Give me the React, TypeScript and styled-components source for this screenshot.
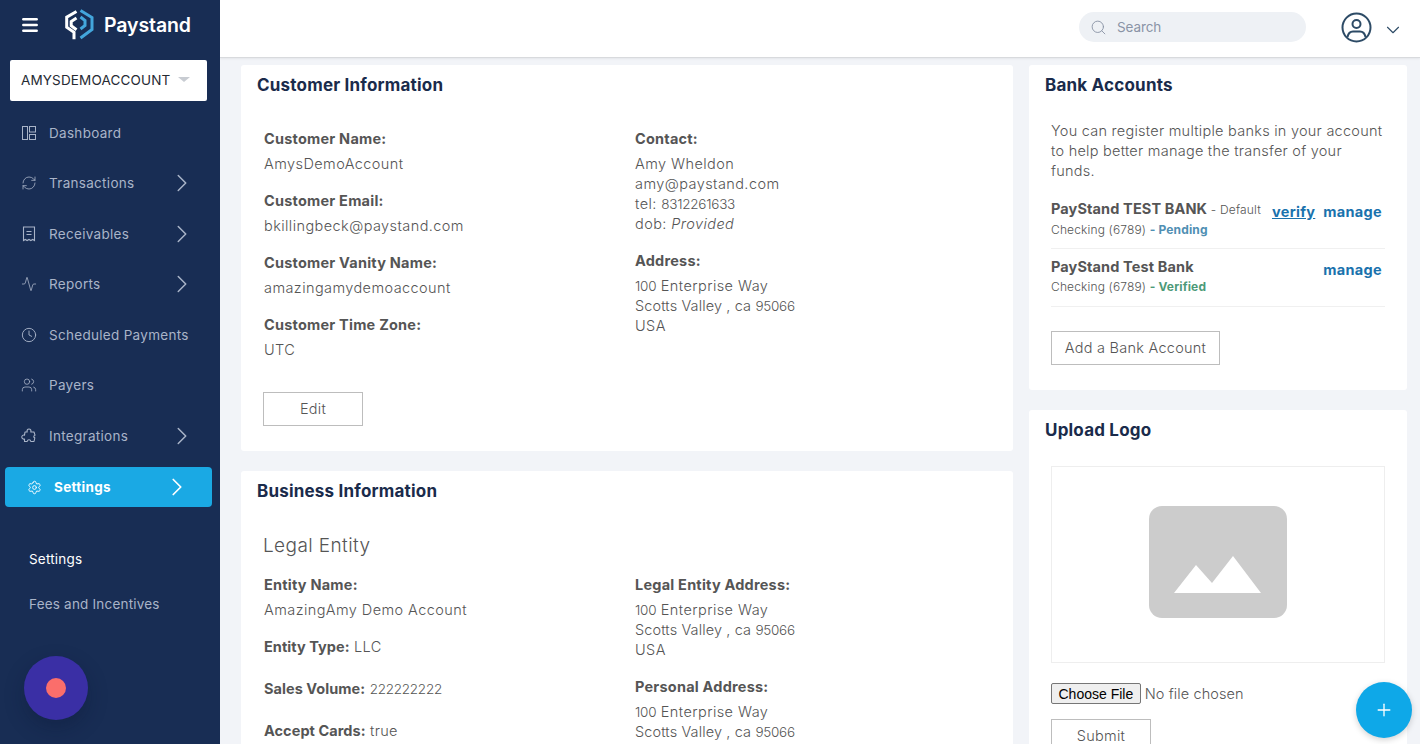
import React from "react";
import styled, { createGlobalStyle } from "styled-components";
import { Activity, ChevronDown, ChevronRight, Clock, Menu, Plus, RefreshCw, Search, Settings, Users } from "lucide-react";

const Global = createGlobalStyle`
  html, body { margin: 0; padding: 0; height: 100%; overflow: hidden; }
  * { box-sizing: border-box; }
  body { font-family: Inter, "Noto Sans", sans-serif; color: #666; background: #f2f4f8; }
`;

const Page = styled.div`
  display: flex; width: 100%; height: 744px; overflow: hidden; position: relative;
`;
const Sidebar = styled.aside`
  width: 220px; flex: none; background: #182d54; display: flex; flex-direction: column; position: relative;
`;
const Brand = styled.div`
  height: 50px; display: flex; align-items: center; padding-left: 20px; color: #fff; flex: none;
`;
const BrandGap = styled.span`
  width: 24px; flex: none;
`;
const Wordmark = styled.span`
  font-size: 19.5px; font-weight: 600; margin-left: 10px; letter-spacing: -0.1px; color: #fff;
`;
const AccountSelect = styled.div`
  margin: 10px 13px 0 10px; height: 41px; background: #fff; border-radius: 2px; display: flex; align-items: center;
  justify-content: space-between; padding: 0 17px 1px 11px; font-size: 13.5px; color: #262a33; letter-spacing: 0.15px; flex: none;
`;
const Caret = styled.span`
  width: 0; height: 0; border-left: 6px solid transparent; border-right: 6px solid transparent; border-top: 5px solid #c8ccd2; margin-top: -2px;
`;
const Nav = styled.nav`
  margin-top: 6.5px; display: flex; flex-direction: column;
`;
const NavItem = styled.div<{ $active?: boolean }>`
  height: ${(p) => (p.$active ? "40px" : "50.5px")};
  margin: ${(p) => (p.$active ? "6px 8px 0 5px" : "0")};
  padding: ${(p) => (p.$active ? "0 20px 0 22px" : "0 23px 0 21px")};
  display: flex; align-items: center; gap: 12px;
  border-radius: 4px;
  background: ${(p) => (p.$active ? "#1aa9e4" : "transparent")};
  color: ${(p) => (p.$active ? "#fff" : "#a9b4c8")};
  font-size: 13.5px; font-weight: ${(p) => (p.$active ? 700 : 400)}; letter-spacing: 0.3px;
  svg { flex: none; }
`;
const NavLabel = styled.span`
  flex: 1; white-space: nowrap;
`;
const SubNav = styled.div`
  margin-top: 42.5px; padding-left: 29px; display: flex; flex-direction: column; gap: 27px;
`;
const SubItem = styled.div<{ $active?: boolean }>`
  font-size: 13.5px; line-height: 18px; letter-spacing: 0.2px; color: ${(p) => (p.$active ? "#fff" : "#a9b4c8")};
`;
const Blob = styled.div`
  position: absolute; left: 24px; top: 656px; width: 64px; height: 64px; border-radius: 50%; background: #3a2fa5;
  display: flex; align-items: center; justify-content: center; box-shadow: 0 8px 20px rgba(10, 20, 50, .3);
`;
const BlobDot = styled.span`
  width: 20px; height: 20px; border-radius: 50%; background: #fb6e6b;
`;
const Main = styled.main`
  flex: 1; min-width: 0; display: flex; flex-direction: column; background: #f2f4f8;
`;
const Header = styled.header`
  height: 58px; flex: none; background: #fff; border-bottom: 1px solid #d8dadd; box-shadow: 0 1px 2px rgba(0, 0, 0, .06);
  display: flex; align-items: center; justify-content: flex-end; padding: 0 16px 3px 0;
`;
const SearchBox = styled.div`
  width: 227px; height: 30px; border-radius: 15px; background: #eef1f5; display: flex; align-items: center;
  padding-left: 11px; gap: 10px; color: #8a94a6; font-size: 13.5px; letter-spacing: -0.1px; margin-right: 35px;
`;
const ChevronWrap = styled.span`
  margin-left: 10px; margin-top: 6px; display: flex; color: #2d4b66;
`;
const Content = styled.div`
  flex: 1; display: flex; gap: 16px; padding: 7px 13px 0 21px; min-height: 0; overflow: hidden;
`;
const Column = styled.div<{ $w: number }>`
  width: ${(p) => p.$w}px; flex: none; display: flex; flex-direction: column; gap: 20px;
`;
const Card = styled.section<{ $h?: number }>`
  background: #fff; border-radius: 3px; padding: 10px 16px 0; flex: none;
  ${(p) => (p.$h ? `height: ${p.$h}px;` : "")}
`;
const CardTitle = styled.h2`
  margin: 0; font-size: 17px; line-height: 21px; font-weight: 700; color: #1a2b4b; letter-spacing: 0.2px;
`;
const TwoCols = styled.div<{ $top: number }>`
  display: grid; grid-template-columns: 371px 1fr; padding-left: 7px; margin-top: ${(p) => p.$top}px;
`;
const Field = styled.div`
  margin-bottom: 17px;
`;
const Label = styled.div`
  font-size: 14.5px; line-height: 20px; font-weight: 700; color: #555; letter-spacing: 0.22px; margin-bottom: 5px;
`;
const Value = styled.div`
  font-size: 14.5px; line-height: 20px; font-weight: 300; color: #555; letter-spacing: 0.42px;
`;
const CityValue = styled(Value)`
  letter-spacing: 0.12px;
`;
const Num = styled.span`
  font-size: 13.5px; letter-spacing: -0.25px;
`;
const InlineField = styled.div`
  font-size: 14.5px; line-height: 20px; font-weight: 300; color: #555; letter-spacing: 0.35px; margin-bottom: 22px;
  b { font-weight: 700; letter-spacing: 0.05px; }
`;
const OutlineButton = styled.button<{ $w: number; $top?: number; $left?: number }>`
  display: block; width: ${(p) => p.$w}px; height: 34px; background: #fff; border: 1px solid #bdbdbd; border-radius: 0;
  font-family: inherit; font-size: 14.5px; font-weight: 300; color: #555; letter-spacing: 0.25px; padding: 0 0 1px;
  margin: ${(p) => p.$top ?? 0}px 0 0 ${(p) => p.$left ?? 0}px;
`;
const SubHeading = styled.h3`
  margin: 32px 0 0; padding-left: 6px; font-size: 19px; line-height: 24px; font-weight: 300; color: #555; letter-spacing: 0.4px;
`;
const Paragraph = styled.p`
  margin: 25px 0 0; padding: 0 6px; font-size: 14.5px; line-height: 20px; font-weight: 300; color: #555; letter-spacing: 0.25px;
`;
const BankRow = styled.div<{ $top?: number }>`
  margin: ${(p) => p.$top ?? 0}px 6px 0; padding: 8px 0; border-bottom: 1px solid #f0f0f0; display: flex; justify-content: space-between; height: 58px;
`;
const BankInfo = styled.div`
  display: flex; flex-direction: column; gap: 2px;
`;
const BankName = styled.div`
  font-size: 14.5px; line-height: 19px; font-weight: 700; color: #555; letter-spacing: 0.12px; white-space: nowrap;
  small { font-size: 12px; font-weight: 300; color: #555; letter-spacing: 0.2px; }
`;
const BankSub = styled.div`
  font-size: 12px; line-height: 18px; font-weight: 300; color: #555; letter-spacing: 0.15px; white-space: nowrap;
`;
const Status = styled.b<{ $c: string }>`
  color: ${(p) => p.$c}; font-weight: 700;
`;
const BankActions = styled.div`
  display: flex; gap: 8px; padding: 3px 3px 0 0;
`;
const BankLink = styled.a<{ $u?: boolean }>`
  font-size: 14.5px; line-height: 19px; font-weight: 700; color: #1a72ad; letter-spacing: 0.3px;
  text-decoration: ${(p) => (p.$u ? "underline" : "none")};
`;
const Preview = styled.div`
  margin: 25px 6px 0; height: 197px; padding-bottom: 5px; border: 1px solid #eee; display: flex; align-items: center; justify-content: center;
`;
const FileRow = styled.div`
  margin: 20px 6px 15px; height: 21px; display: flex;
  input { font-family: Inter, sans-serif; font-size: 14.5px; font-weight: 300; color: #555; letter-spacing: 0.1px; height: 21px; width: 300px; }
  input::file-selector-button { font-family: "Liberation Sans", Arial, sans-serif; font-size: 14px; letter-spacing: 0; color: #000; height: 21px; padding: 0 6.5px; margin-right: 4px; border: 1px solid #767676; border-radius: 2px; background: #efefef; }
`;
const Fab = styled.div`
  position: absolute; left: 1356px; top: 682px; width: 56px; height: 56px; border-radius: 50%; background: #0ea8e8;
  display: flex; align-items: center; justify-content: center; color: #fff; box-shadow: 0 2px 6px rgba(0, 0, 0, .18);
`;
const Indent = styled.div`
  padding: 0 6px;
`;

const Logo = () => (
  <svg width="30" height="32" viewBox="0 0 30 32" fill="none" strokeWidth="3" strokeLinejoin="miter">
    <path d="M12.500 2.500 2.700 8.200v10l7.300 5v7" stroke="#fff" />
    <path d="M12.500 9 7.200 12.500v4.300l5.300 4" stroke="#fff" />
    <path d="M16.500 1.500 28 8.500v12L16.500 29" stroke="#43a6dc" />
    <path d="M16.500 8l4.500 3.500v5L16.500 20" stroke="#43a6dc" />
  </svg>
);
const DashIcon = () => (
  <svg width="16" height="16" viewBox="0 0 16 16" fill="none" stroke="currentColor" strokeWidth="1">
    <rect x="1.500" y="1.500" width="5" height="13" /><rect x="8.500" y="1.500" width="6" height="5.500" /><rect x="8.500" y="9.500" width="6" height="5" />
  </svg>
);
const ReceiptIcon = () => (
  <svg width="16" height="16" viewBox="0 0 16 16" fill="none" stroke="currentColor" strokeWidth="1.100">
    <path d="M2.500 1h11v13.500l-1.800-1-1.900 1-1.800-1-1.900 1-1.800-1-1.800 1V1Z" /><path d="M5.500 5.500h5M5.500 8.500h5" />
  </svg>
);
const PuzzleIcon = () => (
  <svg width="16" height="16" viewBox="0 0 16 16" fill="none" stroke="currentColor" strokeWidth="1.100" strokeLinejoin="round">
    <path d="M4 4h2.200C5.600 2.300 6.600 1 8 1s2.400 1.300 1.800 3H13l1 3.200c-1 .3-1.400 1-1.200 1.800l1 1-.8 3.500H9.800c-.2-1.200-1-1.700-1.800-1.700s-1.600.5-1.800 1.700H3.500V11C2 11.400.8 10.400.8 9S2.200 6.700 3.500 7.200L4 4Z" />
  </svg>
);
const UserIcon = () => (
  <svg width="31" height="31" viewBox="0 0 31 31" fill="none" stroke="#2d4b66" strokeWidth="2">
    <circle cx="15.500" cy="15.500" r="14" /><circle cx="15.500" cy="12" r="4" /><path d="M6.500 25c.8-4 3-5.500 5.500-5.500h7c2.500 0 4.700 1.500 5.500 5.500" />
  </svg>
);
const Placeholder = () => (
  <svg width="138" height="112" viewBox="0 0 138 112">
    <rect width="138" height="112" rx="13" fill="#ccc" />
    <path d="M25 87 47 59l16 18 21-27 28 37Z" fill="#fff" />
  </svg>
);

const nav: [string, React.ReactNode, boolean][] = [
  ["Dashboard", <DashIcon />, false],
  ["Transactions", <RefreshCw size={16} strokeWidth={1.2} />, true],
  ["Receivables", <ReceiptIcon />, true],
  ["Reports", <Activity size={16} strokeWidth={1.2} />, true],
  ["Scheduled Payments", <Clock size={16} strokeWidth={1.4} />, false],
  ["Payers", <Users size={16} strokeWidth={1.2} />, false],
  ["Integrations", <PuzzleIcon />, true],
];

export default function App() {
  return (
    <Page>
      <Global />
      <Sidebar>
        <Brand>
          <Menu size={20} strokeWidth={3} />
          <BrandGap />
          <Logo />
          <Wordmark>Paystand</Wordmark>
        </Brand>
        <AccountSelect>AMYSDEMOACCOUNT<Caret /></AccountSelect>
        <Nav>
          {nav.map(([label, icon, more]) => (
            <NavItem key={label}>
              {icon}
              <NavLabel>{label}</NavLabel>
              {more && <ChevronRight size={30} strokeWidth={1.2} />}
            </NavItem>
          ))}
          <NavItem $active>
            <Settings size={15} strokeWidth={1.5} />
            <NavLabel>Settings</NavLabel>
            <ChevronRight size={30} strokeWidth={1.4} />
          </NavItem>
        </Nav>
        <SubNav>
          <SubItem $active>Settings</SubItem>
          <SubItem>Fees and Incentives</SubItem>
        </SubNav>
        <Blob><BlobDot /></Blob>
      </Sidebar>
      <Main>
        <Header>
          <SearchBox><Search size={17} strokeWidth={1.3} />Search</SearchBox>
          <UserIcon />
          <ChevronWrap><ChevronDown size={22} strokeWidth={1.2} /></ChevronWrap>
        </Header>
        <Content>
          <Column $w={772}>
            <Card $h={386}>
              <CardTitle>Customer Information</CardTitle>
              <TwoCols $top={33}>
                <div>
                  <Field><Label>Customer Name:</Label><Value>AmysDemoAccount</Value></Field>
                  <Field><Label>Customer Email:</Label><Value>bkillingbeck@paystand.com</Value></Field>
                  <Field><Label>Customer Vanity Name:</Label><Value>amazingamydemoaccount</Value></Field>
                  <Field><Label>Customer Time Zone:</Label><Value>UTC</Value></Field>
                </div>
                <div>
                  <Field>
                    <Label>Contact:</Label>
                    <Value>Amy Wheldon</Value><Value>amy@paystand.com</Value><Value>tel: <Num>8312261633</Num></Value>
                    <Value>dob: <i>Provided</i></Value>
                  </Field>
                  <Field>
                    <Label>Address:</Label>
                    <Value><Num>100</Num> Enterprise Way</Value><CityValue>Scotts Valley , ca <Num>95066</Num></CityValue><Value>USA</Value>
                  </Field>
                </div>
              </TwoCols>
              <OutlineButton $w={100} $left={6} $top={15}>Edit</OutlineButton>
            </Card>
            <Card>
              <CardTitle>Business Information</CardTitle>
              <SubHeading>Legal Entity</SubHeading>
              <TwoCols $top={17}>
                <div>
                  <Field><Label>Entity Name:</Label><Value>AmazingAmy Demo Account</Value></Field>
                  <InlineField><b>Entity Type:</b> LLC</InlineField>
                  <InlineField><b>Sales Volume:</b> <Num>222222222</Num></InlineField>
                  <InlineField><b>Accept Cards:</b> true</InlineField>
                </div>
                <div>
                  <Field>
                    <Label>Legal Entity Address:</Label>
                    <Value><Num>100</Num> Enterprise Way</Value><CityValue>Scotts Valley , ca <Num>95066</Num></CityValue><Value>USA</Value>
                  </Field>
                  <Field>
                    <Label>Personal Address:</Label>
                    <Value><Num>100</Num> Enterprise Way</Value><CityValue>Scotts Valley , ca <Num>95066</Num></CityValue>
                  </Field>
                </div>
              </TwoCols>
            </Card>
          </Column>
          <Column $w={378}>
            <Card $h={325}>
              <CardTitle>Bank Accounts</CardTitle>
              <Paragraph>You can register multiple banks in your account to help better manage the transfer of your funds.</Paragraph>
              <BankRow $top={10}>
                <BankInfo>
                  <BankName>PayStand TEST BANK <small>- Default</small></BankName>
                  <BankSub>Checking (6789) <Status $c="#4f8fb3">- Pending</Status></BankSub>
                </BankInfo>
                <BankActions><BankLink $u>verify</BankLink><BankLink>manage</BankLink></BankActions>
              </BankRow>
              <BankRow>
                <BankInfo>
                  <BankName>PayStand Test Bank</BankName>
                  <BankSub>Checking (6789) <Status $c="#4d9a78">- Verified</Status></BankSub>
                </BankInfo>
                <BankActions><BankLink>manage</BankLink></BankActions>
              </BankRow>
              <Indent><OutlineButton $w={169} $top={24}>Add a Bank Account</OutlineButton></Indent>
            </Card>
            <Card>
              <CardTitle>Upload Logo</CardTitle>
              <Preview><Placeholder /></Preview>
              <FileRow><input type="file" /></FileRow>
              <Indent><OutlineButton $w={100}>Submit</OutlineButton></Indent>
            </Card>
          </Column>
        </Content>
      </Main>
      <Fab><Plus size={20} strokeWidth={1.6} /></Fab>
    </Page>
  );
}
